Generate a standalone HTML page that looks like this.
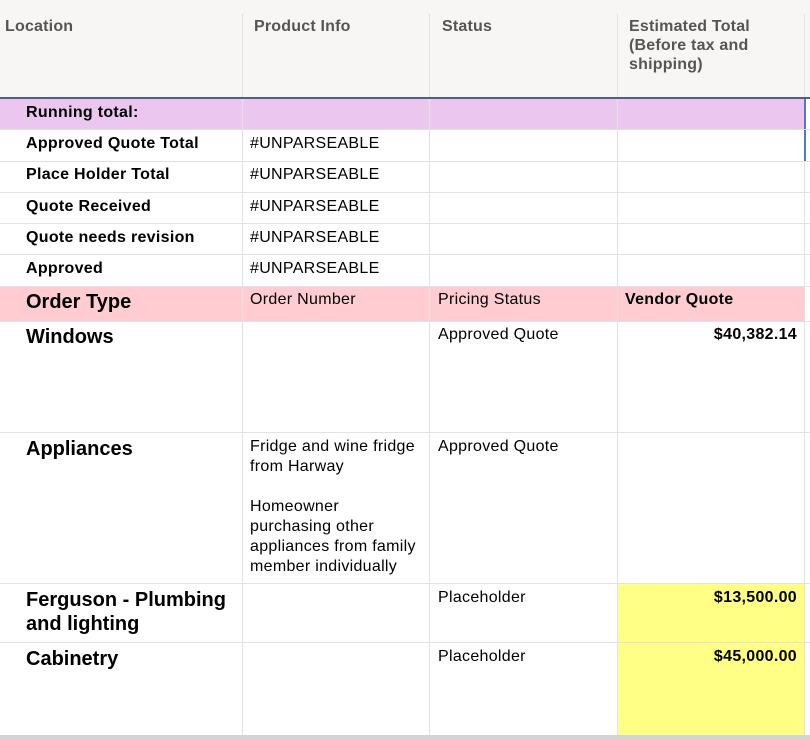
<!DOCTYPE html>
<html><head><style>
*{margin:0;padding:0;box-sizing:border-box}
body{width:810px;height:739px;overflow:hidden;background:#fff;font-family:"Liberation Sans",Arial,sans-serif;position:relative;color:#000}
.a{position:absolute}
.hd{font-weight:bold;font-size:16px;letter-spacing:0.2px;color:#555;line-height:19px}
.v{position:absolute;width:1px;background:#e2e2e2}
.h{position:absolute;left:0;width:810px;height:1px;background:#e2e2e2}
.b{font-weight:bold;font-size:16px;letter-spacing:0.3px}
.n{font-size:16px;letter-spacing:0.3px;line-height:20px}
.L{font-weight:bold;font-size:20px;line-height:24px}
</style></head><body>
<div class="a" style="left:0;top:0;width:810px;height:97px;background:#f7f6f4"></div>
<div class="v" style="left:242px;top:14px;height:83px"></div>
<div class="v" style="left:429px;top:14px;height:83px"></div>
<div class="v" style="left:617px;top:14px;height:83px"></div>
<div class="v" style="left:804px;top:14px;height:83px"></div>
<div class="a hd" style="left:5px;top:17px">Location</div>
<div class="a hd" style="left:254px;top:17px">Product Info</div>
<div class="a hd" style="left:442px;top:17px">Status</div>
<div class="a hd" style="left:629px;top:17px">Estimated Total<br>(Before tax and<br>shipping)</div>
<div class="a" style="left:0;top:97px;width:810px;height:2px;background:#4e5f80"></div>
<div class="a" style="left:0;top:99px;width:804px;height:30px;background:#ebc7ef"></div>
<div class="a" style="left:0;top:286px;width:804px;height:35px;background:#ffccd1"></div>
<div class="a" style="left:617px;top:583px;width:187px;height:152px;background:#ffff86"></div>
<div class="v" style="left:242px;top:99px;height:636px"></div>
<div class="v" style="left:429px;top:99px;height:636px"></div>
<div class="v" style="left:617px;top:99px;height:636px"></div>
<div class="v" style="left:804px;top:99px;height:636px"></div>
<div class="a" style="left:804px;top:99px;width:2px;height:62px;background:#4a7bd0"></div>
<div class="h" style="top:129px"></div><div class="h" style="top:161px"></div><div class="h" style="top:192px"></div><div class="h" style="top:223px"></div><div class="h" style="top:254px"></div><div class="h" style="top:286px"></div><div class="h" style="top:321px"></div><div class="h" style="top:432px"></div><div class="h" style="top:583px"></div><div class="h" style="top:642px"></div>
<div class="a" style="left:0;top:735px;width:810px;height:4px;background:#d4d4d4"></div>
<div class="a b" style="left:26px;top:104px">Running total:</div>
<div class="a b" style="left:26px;top:135px">Approved Quote Total</div>
<div class="a b" style="left:26px;top:166px">Place Holder Total</div>
<div class="a b" style="left:26px;top:198px">Quote Received</div>
<div class="a b" style="left:26px;top:229px">Quote needs revision</div>
<div class="a b" style="left:26px;top:260px">Approved</div>
<div class="a n" style="left:250px;top:134px">#UNPARSEABLE</div>
<div class="a n" style="left:250px;top:165px">#UNPARSEABLE</div>
<div class="a n" style="left:250px;top:197px">#UNPARSEABLE</div>
<div class="a n" style="left:250px;top:228px">#UNPARSEABLE</div>
<div class="a n" style="left:250px;top:259px">#UNPARSEABLE</div>
<div class="a" style="left:26px;top:291px;font-weight:bold;font-size:20px">Order Type</div>
<div class="a n" style="left:250px;top:290px">Order Number</div>
<div class="a n" style="left:438px;top:290px">Pricing Status</div>
<div class="a b" style="left:625px;top:290px;line-height:20px">Vendor Quote</div>
<div class="a L" style="left:26px;top:325px">Windows</div>
<div class="a n" style="left:438px;top:325px">Approved Quote</div>
<div class="a b" style="left:617px;width:180px;text-align:right;top:325px;line-height:20px">$40,382.14</div>
<div class="a L" style="left:26px;top:437px">Appliances</div>
<div class="a n" style="left:250px;top:437px">Fridge and wine fridge<br>from Harway<br><br>Homeowner<br>purchasing other<br>appliances from family<br>member individually</div>
<div class="a n" style="left:438px;top:437px">Approved Quote</div>
<div class="a L" style="left:26px;top:588px">Ferguson - Plumbing<br>and lighting</div>
<div class="a n" style="left:438px;top:588px">Placeholder</div>
<div class="a b" style="left:617px;width:180px;text-align:right;top:588px;line-height:20px">$13,500.00</div>
<div class="a L" style="left:26px;top:647px">Cabinetry</div>
<div class="a n" style="left:438px;top:647px">Placeholder</div>
<div class="a b" style="left:617px;width:180px;text-align:right;top:647px;line-height:20px">$45,000.00</div>
</body></html>
